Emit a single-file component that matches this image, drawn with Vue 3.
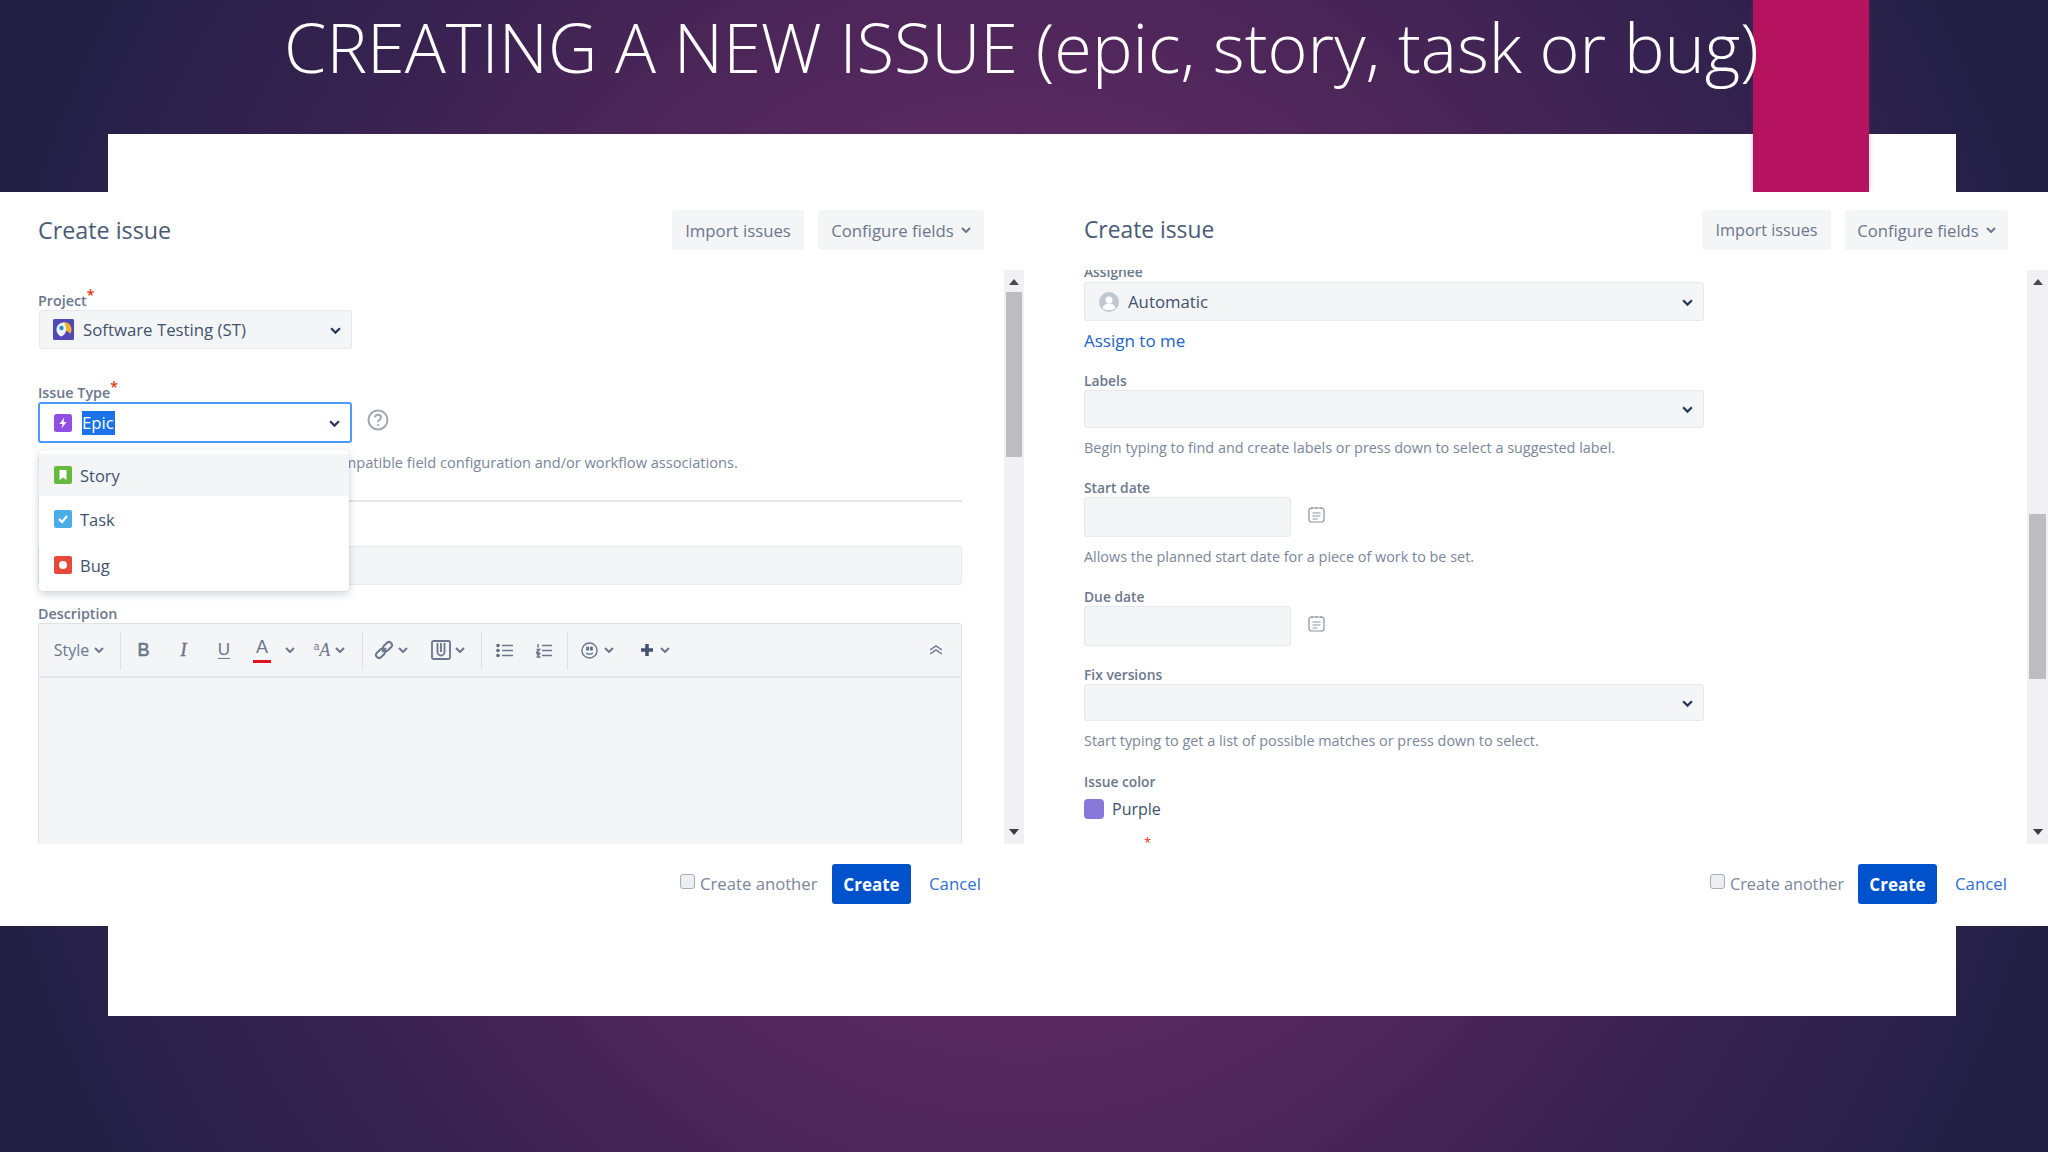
<script setup>
const tools = [
  { k: 'style', gap: 14 },
  { k: 'chev', gap: 4 },
  { k: 'sep', gap: 16 },
  { k: 'b', gap: 16 },
  { k: 'i', gap: 28 },
  { k: 'u', gap: 27 },
  { k: 'a', gap: 21 },
  { k: 'chev', gap: 14 },
  { k: 'sup', gap: 16 },
  { k: 'chev', gap: 2 },
  { k: 'sep', gap: 17 },
  { k: 'link', gap: 11 },
  { k: 'chev', gap: 4 },
  { k: 'attach', gap: 23 },
  { k: 'chev', gap: 4 },
  { k: 'sep', gap: 16 },
  { k: 'bullets', gap: 14 },
  { k: 'numbers', gap: 23 },
  { k: 'sep', gap: 15 },
  { k: 'emoji', gap: 13 },
  { k: 'chev', gap: 6 },
  { k: 'plus', gap: 26 },
  { k: 'chev', gap: 6 },
]
</script>

<template>
  <div class="slide">
    <div class="sheet"></div>
    <div class="accent"></div>
    <h1 class="title">CREATING A NEW ISSUE (epic, story, task or bug)</h1>

    <div class="shots">
      <!-- left dialog -->
      <section class="dialog dialog-left">
        <header class="head">
          <h2 class="heading">Create issue</h2>
          <div class="head-actions">
            <button class="ghost import-l">Import issues</button>
            <button class="ghost config-l">Configure fields
              <svg class="chev-s" viewBox="0 0 10 6"><path d="M1 1l4 4 4-4" /></svg>
            </button>
          </div>
        </header>

        <div class="body">
          <div class="form form-left">
            <label class="lab lab-project">Project<sup class="req">*</sup></label>
            <div class="field project">
              <svg class="proj-icon" viewBox="0 0 21 21">
                <rect width="21" height="21" rx="1.500" fill="#5148b8" />
                <path d="M10 3.500c4.500-.8 8 2 8.500 6.500.2 2-.5 3.500-1.500 5-1-2-2.500-3-4-3z" fill="#f6b12c" />
                <path d="M11 3.500C6.500 3.500 3.500 6.500 3.500 10.500c0 3 1.500 5.500 4.500 7 3-1 5-3.500 5-6.500 0-3-.5-5.500-2-7.500z" fill="#e9f6fc" />
                <circle cx="8.500" cy="9" r="2.200" fill="#2a8fd0" />
              </svg>
              <span class="val">Software Testing (ST)</span>
              <svg class="chev" viewBox="0 0 10 7"><path d="M1 1l4 4 4-4" /></svg>
            </div>

            <label class="lab lab-type">Issue Type<sup class="req">*</sup></label>
            <div class="type-row">
              <div class="field focused">
                <svg class="type-icon" viewBox="0 0 18 18">
                  <rect width="18" height="18" rx="2.500" fill="#904ee2" />
                  <path d="M10.200 3.400L5.500 10h3l-1 4.600L12.500 8h-3z" fill="#fff" />
                </svg>
                <span class="sel-wrap"><span class="sel">Epic</span></span>
                <svg class="chev" viewBox="0 0 10 7"><path d="M1 1l4 4 4-4" /></svg>
              </div>
              <svg class="help" viewBox="0 0 22 22">
                <circle cx="11" cy="11" r="9.500" />
                <path d="M8 8.600c0-1.700 1.300-2.800 3-2.800s3 1.100 3 2.600c0 2.400-3 2.300-3 4.600" />
                <circle class="dot" cx="11" cy="16" r="1.100" />
              </svg>
            </div>
            <p class="hint hint-left">Some issue types are unavailable due to incompatible field configuration and/or workflow associations.</p>
            <div class="rule"></div>
            <div class="field summary"></div>
            <label class="lab lab-desc">Description</label>
            <div class="toolbar">
              <template v-for="(t, n) in tools" :key="n">
                <span class="tool" :class="'t-' + t.k" :style="{ marginLeft: t.gap + 'px' }">
                  <template v-if="t.k === 'style'">Style</template>
                  <svg v-else-if="t.k === 'chev'" class="tb-chev" viewBox="0 0 10 6"><path d="M1 1l4 4 4-4" /></svg>
                  <template v-else-if="t.k === 'b'">B</template>
                  <template v-else-if="t.k === 'i'">I</template>
                  <template v-else-if="t.k === 'u'">U</template>
                  <template v-else-if="t.k === 'a'">A</template>
                  <template v-else-if="t.k === 'sup'"><small>a</small>A</template>
                  <svg v-else-if="t.k === 'link'" viewBox="0 0 20 20" class="tb-ic tb-link"><rect x="10.500" y="1.500" width="6" height="10" rx="3" transform="rotate(45 13.500 6.500)" /><rect x="3.500" y="8.500" width="6" height="10" rx="3" transform="rotate(45 6.500 13.500)" /><path d="M8 12l4-4" /></svg>
                  <svg v-else-if="t.k === 'attach'" viewBox="0 0 20 20" class="tb-ic tb-attach"><rect x="1" y="1" width="18" height="18" rx="1.500" /><path d="M6.500 3v9a3.500 3.500 0 0 0 7 0V3M10 3v9" /></svg>
                  <svg v-else-if="t.k === 'bullets'" viewBox="0 0 17 15" class="tb-ic"><path d="M6 2.500h11M6 7.500h11M6 12.500h11" /><circle class="fill" cx="2" cy="2.500" r="1.800" /><circle class="fill" cx="2" cy="7.500" r="1.800" /><circle class="fill" cx="2" cy="12.500" r="1.800" /></svg>
                  <svg v-else-if="t.k === 'numbers'" viewBox="0 0 16 15" class="tb-ic"><path d="M6 2.500h10M6 7.500h10M6 12.500h10M2 1v3.500M.5 6.500h3l-3 3h3M.5 11h3l-1.500 1.500 1.500 1.500h-3" /></svg>
                  <svg v-else-if="t.k === 'emoji'" viewBox="0 0 18 18" class="tb-ic"><circle cx="9" cy="9" r="8" /><path class="fill" d="M5.500 5h3v4h-3zM9.500 5h3v4h-3z" /><path d="M5.500 11.500c1.500 2 5.500 2 7 0" /></svg>
                  <svg v-else-if="t.k === 'plus'" viewBox="0 0 14 14" class="tb-plus"><path d="M7 1v12M1 7h12" /></svg>
                </span>
              </template>
              <svg class="collapse" viewBox="0 0 14 10"><path d="M1 5l6-4 6 4M1 9l6-4 6 4" /></svg>
            </div>
            <div class="editor"></div>

            <ul class="menu">
              <li class="opt active">
                <svg class="type-icon" viewBox="0 0 18 18"><rect width="18" height="18" rx="2" fill="#63ba3c" /><path d="M5.500 4h7v10L9 11.500 5.500 14z" fill="#fff" /></svg>
                Story
              </li>
              <li class="opt">
                <svg class="type-icon" viewBox="0 0 18 18"><rect width="18" height="18" rx="2" fill="#4bade8" /><path d="M5 9l3 3 5-6" fill="none" stroke="#fff" stroke-width="2.200" /></svg>
                Task
              </li>
              <li class="opt">
                <svg class="type-icon" viewBox="0 0 18 18"><rect width="18" height="18" rx="2" fill="#e5493a" /><circle cx="9" cy="9" r="4" fill="#fff" /></svg>
                Bug
              </li>
            </ul>
          </div>
          <div class="scroll scroll-left">
            <i class="arrow up"></i>
            <div class="track"><div class="thumb thumb-left"></div></div>
            <i class="arrow down"></i>
          </div>
        </div>

        <footer class="foot foot-left">
          <span class="check"></span>
          <span class="another">Create another</span>
          <button class="primary">Create</button>
          <a class="cancel">Cancel</a>
        </footer>
      </section>

      <!-- right dialog -->
      <section class="dialog dialog-right">
        <header class="head">
          <h2 class="heading narrow">Create issue</h2>
          <div class="head-actions">
            <button class="ghost import-r">Import issues</button>
            <button class="ghost config-r">Configure fields
              <svg class="chev-s" viewBox="0 0 10 6"><path d="M1 1l4 4 4-4" /></svg>
            </button>
          </div>
        </header>

        <div class="body">
          <div class="form form-right">
            <label class="lab r-lab">Assignee</label>
            <div class="field wide assignee">
              <svg class="avatar" viewBox="0 0 20 20">
                <circle cx="10" cy="10" r="10" fill="#c1c7d0" />
                <circle cx="10" cy="8" r="3.500" fill="#fff" />
                <path d="M3.500 16c1-3.500 4-4.500 6.500-4.500s5.500 1 6.500 4.500c-3 3-10 3-13 0z" fill="#fff" />
              </svg>
              <span class="val">Automatic</span>
              <svg class="chev" viewBox="0 0 10 7"><path d="M1 1l4 4 4-4" /></svg>
            </div>
            <a class="assign">Assign to me</a>

            <label class="lab r-lab labels-lab">Labels</label>
            <div class="field wide labels-box">
              <svg class="chev" viewBox="0 0 10 7"><path d="M1 1l4 4 4-4" /></svg>
            </div>
            <p class="hint r-hint">Begin typing to find and create labels or press down to select a suggested label.</p>

            <label class="lab r-lab start-lab">Start date</label>
            <div class="date-row">
              <div class="date"></div>
              <svg class="cal" viewBox="0 0 17 17"><rect x="1" y="2" width="15" height="14" rx="2.500" /><path d="M4 1v2M8.500 1v2M13 1v2M4.500 7h8M4.500 10h8M4.500 13h5" /></svg>
            </div>
            <p class="hint r-hint">Allows the planned start date for a piece of work to be set.</p>

            <label class="lab r-lab due-lab">Due date</label>
            <div class="date-row">
              <div class="date"></div>
              <svg class="cal" viewBox="0 0 17 17"><rect x="1" y="2" width="15" height="14" rx="2.500" /><path d="M4 1v2M8.500 1v2M13 1v2M4.500 7h8M4.500 10h8M4.500 13h5" /></svg>
            </div>

            <label class="lab r-lab fix-lab">Fix versions</label>
            <div class="field wide short">
              <svg class="chev" viewBox="0 0 10 7"><path d="M1 1l4 4 4-4" /></svg>
            </div>
            <p class="hint r-hint">Start typing to get a list of possible matches or press down to select.</p>

            <label class="lab r-lab color-lab">Issue color</label>
            <div class="color-row"><span class="swatch"></span><span class="val purple">Purple</span></div>
            <div class="star">*</div>
          </div>
          <div class="scroll scroll-right">
            <i class="arrow up"></i>
            <div class="track"><div class="thumb thumb-right"></div></div>
            <i class="arrow down"></i>
          </div>
        </div>

        <footer class="foot foot-right">
          <span class="check"></span>
          <span class="another">Create another</span>
          <button class="primary">Create</button>
          <a class="cancel">Cancel</a>
        </footer>
      </section>
    </div>
  </div>
</template>

<style scoped>
* { box-sizing: border-box; }
.slide {
  position: relative;
  width: 2048px;
  height: 1152px;
  overflow: hidden;
  font-family: "Open Sans", "Noto Sans", sans-serif;
  background: radial-gradient(ellipse 1060px 1150px at 50% 50%, #5f2c67 0%, #582960 38%, #4a2558 55%, #362250 75%, #232046 100%);
}
.sheet { position: absolute; left: 108px; top: 134px; width: 1848px; height: 882px; background: #fff; }
.accent { position: absolute; left: 1753px; top: 0; width: 116px; height: 192px; background: #b5135f; box-shadow: 0 0 5px rgba(120, 60, 90, .35); }
.title {
  position: absolute;
  left: 284px;
  top: 0;
  margin: 0;
  font-size: 68.300px;
  line-height: 94px;
  font-weight: 300;
  color: #fff;
  white-space: nowrap;
}
.shots { position: absolute; left: 0; top: 192px; width: 2048px; height: 734px; display: flex; background: #fff; }
.dialog { display: flex; flex-direction: column; height: 100%; }
.dialog-left { width: 1040px; flex: none; }
.dialog-right { flex: 1; min-width: 0; }
.head { height: 78px; display: flex; align-items: flex-start; justify-content: space-between; }
.dialog-left .head { padding: 18px 56px 0 38px; }
.dialog-right .head { padding: 18px 40px 0 44px; }
.heading { margin: 0; font-size: 23.300px; line-height: 40px; font-weight: 400; color: #4a5a75; white-space: nowrap; }
.heading.narrow { font-size: 22.800px; }
.head-actions { display: flex; gap: 14px; }
.ghost {
  height: 40px;
  border: 0;
  border-radius: 3px;
  background: #f4f5f7;
  color: #6b778c;
  font: 400 16.800px "Open Sans", sans-serif;
  padding: 0;
  display: flex;
  align-items: center;
  justify-content: center;
  gap: 7px;
  white-space: nowrap;
}
.import-l { width: 132px; }
.config-l { width: 166px; }
.import-r { width: 129px; font-size: 16.200px; }
.config-r { width: 163px; font-size: 16.600px; }
.chev-s { width: 10px; height: 6px; flex: none; fill: none; stroke: #6b778c; stroke-width: 2; }

.body { height: 574px; display: flex; }
.form { position: relative; overflow: hidden; height: 100%; }
.form-left { width: 964px; margin-right: 40px; padding-left: 38px; flex: none; }
.form-right { flex: 1; padding-left: 44px; min-width: 0; }

.lab { display: block; height: 18px; font-size: 14.300px; line-height: 18px; font-weight: 600; color: #6b778c; white-space: nowrap; }
.lab-project { margin-top: 22px; }
.lab-type { margin-top: 35px; }
.lab-desc { margin-top: 20px; }
.req { color: #de350b; font-size: 14px; line-height: 0; vertical-align: 6px; }

.field {
  position: relative;
  display: flex;
  align-items: center;
  background: #f4f5f7;
  border: 1px solid #e6e8ec;
  border-radius: 3px;
}
.project { width: 313px; height: 39px; margin-left: 1px; padding-left: 13px; }
.proj-icon { width: 21px; height: 21px; margin-right: 9px; }
.val { font-size: 16.800px; color: #42526e; white-space: nowrap; }
.chev { position: absolute; right: 10px; top: 50%; width: 11px; height: 8px; margin-top: -3px; fill: none; stroke: #253858; stroke-width: 2; }
.type-row { display: flex; align-items: center; gap: 15px; }
.focused { width: 314px; height: 41px; background: #fff; border: 2px solid #4c9aff; padding-left: 14px; flex: none; }
.type-icon { width: 18px; height: 18px; flex: none; }
.sel-wrap { width: 33px; margin-left: 10px; overflow: hidden; height: 24px; }
.sel { display: block; font-size: 16.800px; line-height: 24px; background: #1a73e8; color: #fff; white-space: nowrap; }
.help { width: 22px; height: 22px; margin-top: -6px; fill: none; stroke: #a0a8b6; stroke-width: 2; }
.help .dot { fill: #a0a8b6; stroke: none; }
.hint { margin: 0; font-size: 14.400px; line-height: 18px; color: #7a869a; white-space: nowrap; }
.hint-left { margin-top: 10px; font-size: 14.600px; }
.rule { margin-top: 29px; height: 2px; width: 924px; background: #e4e6ea; }
.summary { margin-top: 44px; height: 39px; width: 924px; }
.wide { width: 620px; }
.toolbar {
  display: flex;
  align-items: center;
  width: 924px;
  height: 55px;
  background: #f4f5f7;
  border: 1px solid #dfe1e6;
  border-bottom: 2px solid #e4e6ea;
  border-radius: 3px 3px 0 0;
  position: relative;
}
.tool { display: inline-flex; align-items: center; justify-content: center; color: #505f79; flex: none; }
.t-style { width: 37px; font-size: 16px; color: #6b778c; }
.t-chev { width: 10px; }
.tb-chev { width: 10px; height: 6px; fill: none; stroke: #6b778c; stroke-width: 2; }
.t-sep { width: 1px; height: 39px; background: #dfe1e6; }
.t-b { width: 13px; font: 400 18px "Liberation Sans", sans-serif; color: #6b778c; -webkit-text-stroke: .6px #6b778c; }
.t-i { width: 11px; font: italic 400 18px "Liberation Serif", serif; color: #6b778c; -webkit-text-stroke: .5px #6b778c; }
.t-u { width: 16px; font: 400 17px "Liberation Sans", sans-serif; color: #6b778c; text-decoration: underline; text-underline-offset: 3px; }
.t-a { width: 18px; height: 26px; font: 400 18px "Liberation Sans", sans-serif; color: #6b778c; border-bottom: 3px solid #e3101e; line-height: 20px; align-items: flex-start; }
.t-sup { width: 22px; font: italic 400 18px "Liberation Serif", serif; color: #6b778c; }
.t-sup small { font: 400 10px "Liberation Sans", sans-serif; margin-top: -8px; }
.t-link, .t-attach { width: 20px; height: 20px; }
.t-bullets { width: 17px; height: 15px; }
.t-numbers { width: 16px; height: 15px; }
.t-emoji { width: 17px; height: 17px; }
.t-plus { width: 14px; height: 14px; }
.tb-ic { width: 100%; height: 100%; fill: none; stroke: #6b778c; stroke-width: 1.500; }
.tb-ic .fill { fill: #5e6c84; stroke: none; }
.tb-link { stroke-width: 2; }
.tb-attach { stroke-width: 1.800; }
.tb-plus { width: 100%; height: 100%; fill: none; stroke: #42526e; stroke-width: 3.500; }
.collapse { width: 14px; height: 10px; margin-left: auto; margin-right: 18px; fill: none; stroke: #6b778c; stroke-width: 1.500; }
.editor { width: 924px; height: 200px; background: #f4f5f7; border-left: 1px solid #dfe1e6; border-right: 1px solid #dfe1e6; }

.menu {
  position: absolute;
  left: 39px;
  top: 180px;
  width: 310px;
  height: 141px;
  margin: 0;
  padding: 4px 0 0;
  list-style: none;
  background: #fff;
  border-radius: 4px;
  box-shadow: 0 3px 9px rgba(9, 30, 66, .2), 0 0 1px rgba(9, 30, 66, .2);
}
.opt { height: 46px; display: flex; align-items: center; gap: 8px; padding-left: 15px; font-size: 16.500px; color: #42526e; }
.opt.active { height: 42px; background: #f4f5f7; }

.scroll { flex: none; display: flex; flex-direction: column; align-items: center; background: #f1f0f3; }
.scroll-left { width: 20px; margin-right: 16px; }
.scroll-right { width: 21px; }
.track { flex: 1; width: 100%; padding: 0 2px; }
.thumb { width: 100%; background: #bdbcc0; }
.thumb-left { height: 165px; }
.thumb-right { height: 165px; margin-top: 222px; }
.arrow { display: block; width: 0; height: 0; border-left: 5px solid transparent; border-right: 5px solid transparent; flex: none; }
.arrow.up { margin: 9px 0 7px; border-bottom: 6px solid #4a4a55; }
.arrow.down { margin: 9px 0; border-top: 6px solid #3c3c45; }

.foot { flex: 1; display: flex; align-items: flex-start; padding-top: 20px; }
.foot-left { padding-left: 680px; }
.foot-right { padding-left: 670px; }
.check { width: 15px; height: 15px; margin-top: 10px; background: #eceef1; border: 1.500px solid #a5adba; border-radius: 3px; flex: none; }
.another { width: 132px; margin-left: 5px; padding-top: 10px; font-size: 16.700px; line-height: 20px; color: #7a869a; white-space: nowrap; }
.foot-right .another { width: 128px; font-size: 16.200px; }
.primary {
  width: 79px;
  height: 40px;
  border: 0;
  border-radius: 3px;
  background: #0052cc;
  color: #fff;
  font: 700 17px "Open Sans", sans-serif;
  padding: 0;
  flex: none;
}
.cancel { margin-left: 18px; padding-top: 10px; font-size: 16.800px; line-height: 20px; color: #2f6fd0; }

.r-lab { font-size: 13.800px; line-height: 18px; }
.form-right > .r-lab:first-child { margin-top: -7px; }
.assignee { height: 39px; margin-top: 1px; padding-left: 14px; }
.avatar { width: 20px; height: 20px; margin-right: 9px; }
.assign { display: block; margin-top: 9px; height: 22px; font-size: 17px; line-height: 22px; color: #1d62c9; }
.labels-lab { margin-top: 20px; }
.labels-box { height: 38px; }
.short { height: 37px; }
.r-hint { margin-top: 11px; }
.start-lab { margin-top: 22px; }
.due-lab { margin-top: 22px; }
.date-row { display: flex; align-items: flex-start; }
.date { width: 207px; height: 40px; background: #f4f5f7; border: 1px solid #e6e8ec; border-radius: 3px; }
.cal { width: 17px; height: 17px; margin: 9px 0 0 17px; fill: none; stroke: #8993a4; stroke-width: 1.200; }
.fix-lab { margin-top: 20px; }
.color-lab { margin-top: 23px; }
.color-row { display: flex; align-items: center; gap: 8px; margin-top: 8px; height: 20px; }
.swatch { width: 20px; height: 20px; border-radius: 4px; background: #8777d9; }
.purple { font-size: 16px; }
.star { margin: 16px 0 0 60px; font-size: 13px; line-height: 14px; color: #de350b; }
</style>
